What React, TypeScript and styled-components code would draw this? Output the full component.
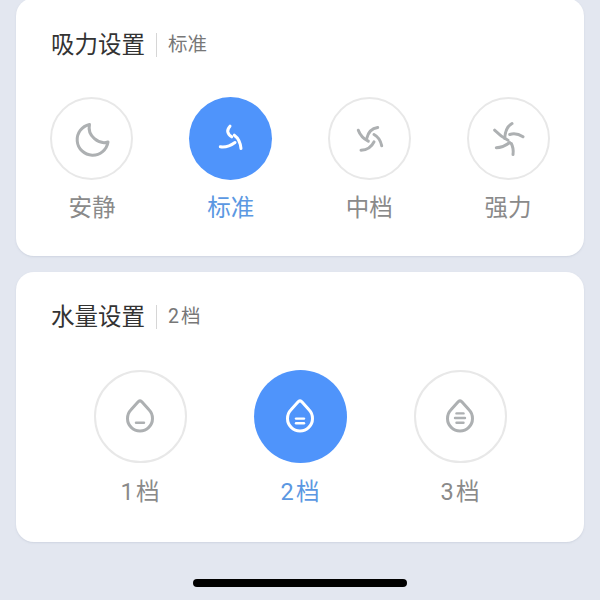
import styled, { createGlobalStyle } from 'styled-components'

type Point = [number, number]

// blade from start to end, bent towards the traced middle point
const blade = ([a, b, c]: Point[]) => {
  const cx = 1.5 * b[0] - (a[0] + c[0]) / 4
  const cy = 1.5 * b[1] - (a[1] + c[1]) / 4
  return `M${a[0]} ${a[1]}Q${cx} ${cy} ${c[0]} ${c[1]}`
}

const FAN_3: Point[][] = [
  [[17, 5.2], [13.7, 10.8], [18.7, 15.8]],
  [[7.3, 25.8], [14.7, 25.8], [22, 21.5]],
  [[21.3, 14.2], [26.3, 19.2], [28, 27.5]],
]

const FAN_4: Point[][] = [
  [[7.3, 9.2], [10.7, 15.8], [17.3, 20.2]],
  [[26.7, 6.5], [19, 9.2], [15.7, 17.5]],
  [[30.7, 24.8], [28.3, 17.5], [23, 13.5]],
  [[10, 29.2], [18.3, 27.5], [23, 20.8]],
]

const FAN_5: Point[][] = [
  [[22, 2.5], [16.3, 7.5], [14.7, 17.5]],
  [[4.7, 9.2], [10.7, 14.8], [18, 19.2]],
  [[33, 15.8], [26.3, 12.5], [19.7, 13.5]],
  [[23, 33.5], [23.3, 27.5], [21.3, 22.5]],
  [[6.3, 26.8], [13, 25.8], [19.7, 21.5]],
]

const MoonIcon = () => (
  <IconSvg viewBox="0 0 36 36" width={36} height={36} $width={3}>
    <path d="M15.5 3.5A15.5 15.5 0 1 0 34 21C25 24 13 15 15.5 3.5Z" />
  </IconSvg>
)

const FanIcon = ({ blades, active }: { blades: Point[][]; active?: boolean }) => (
  <IconSvg viewBox="0 0 36 36" width={36} height={36} $width={3} $active={active}>
    {blades.map((b, i) => (
      <path key={i} d={blade(b)} />
    ))}
  </IconSvg>
)

const DropIcon = ({ bars, active }: { bars: [number, number, number][]; active?: boolean }) => (
  <IconSvg viewBox="0 0 40 40" width={40} height={40} $width={3} $active={active}>
    <path d="M18.4 4.6Q20 3.2 21.6 4.6L29 12.8A12.5 12.5 0 1 1 11 12.8Z" />
    {bars.map(([x1, x2, y], i) => (
      <path key={i} d={`M${x1} ${y}H${x2}`} strokeWidth={2.4} />
    ))}
  </IconSvg>
)

const SUCTION = [
  { label: '安静', icon: <MoonIcon /> },
  { label: '标准', icon: <FanIcon blades={FAN_3} active />, active: true },
  { label: '中档', icon: <FanIcon blades={FAN_4} /> },
  { label: '强力', icon: <FanIcon blades={FAN_5} /> },
]

const WATER = [
  { label: '1\u200a档', icon: <DropIcon bars={[[16, 24, 25.8]]} /> },
  {
    label: '2\u200a档',
    icon: <DropIcon bars={[[16, 24, 21.6], [16, 24, 26.2]]} active />,
    active: true,
  },
  {
    label: '3\u200a档',
    icon: <DropIcon bars={[[16.5, 23.5, 16.4], [15, 25, 21], [16.5, 23.5, 25.8]]} />,
  },
]

export default function App() {
  return (
    <Page>
      <GlobalStyle />

      <Card $top={32} $bottom={33} $clipped>
        <CardHeader>
          <CardTitle>吸力设置</CardTitle>
          <CardValue>标准</CardValue>
        </CardHeader>
        <OptionRow $count={4} $inset={6.67} $gap={37}>
          {SUCTION.map((item) => (
            <Option key={item.label}>
              <OptionCircle $size={83} $active={item.active}>
                {item.icon}
              </OptionCircle>
              <OptionLabel $gap={13} $active={item.active}>
                {item.label}
              </OptionLabel>
            </Option>
          ))}
        </OptionRow>
      </Card>

      <Card $top={30} $bottom={35}>
        <CardHeader>
          <CardTitle>水量设置</CardTitle>
          <CardValue>2{'\u200a'}档</CardValue>
        </CardHeader>
        <OptionRow $count={3} $inset={44} $gap={38}>
          {WATER.map((item) => (
            <Option key={item.label}>
              <OptionCircle $size={93} $active={item.active}>
                {item.icon}
              </OptionCircle>
              <OptionLabel $gap={14} $active={item.active}>
                {item.label}
              </OptionLabel>
            </Option>
          ))}
        </OptionRow>
      </Card>

      <HomeBar />
    </Page>
  )
}

const GlobalStyle = createGlobalStyle`
  html, body {
    margin: 0;
    padding: 0;
    background-color: #e3e7f0;
  }
`

const Page = styled.div`
  width: 600px;
  height: 600px;
  box-sizing: border-box;
  overflow: hidden;
  padding: 0 16px;
  display: flex;
  flex-direction: column;
  gap: 16px;
  background-color: #e3e7f0;
  font-family: 'Roboto', 'Noto Sans CJK SC', sans-serif;
`

const Card = styled.div<{ $top: number; $bottom: number; $clipped?: boolean }>`
  background-color: #fff;
  border-radius: 18px;
  box-shadow: 0 1px 2px rgba(170, 178, 195, 0.35);
  padding: ${(p) => p.$top}px 0 ${(p) => p.$bottom}px;
  margin-top: ${(p) => (p.$clipped ? '-2px' : '0')};
`

const CardHeader = styled.div`
  display: flex;
  align-items: center;
  height: 30px;
  padding-left: 35px;
`

const CardTitle = styled.div`
  font-size: 23.5px;
  line-height: 30px;
  color: #333;
  padding-right: 11px;
`

const CardValue = styled.div`
  font-size: 19.5px;
  line-height: 24px;
  color: #777;
  padding-left: 11px;
  border-left: 1px solid #d6d6d6;
`

const OptionRow = styled.div<{ $count: number; $inset: number; $gap: number }>`
  display: grid;
  grid-template-columns: repeat(${(p) => p.$count}, 1fr);
  padding: 0 ${(p) => p.$inset}px;
  margin-top: ${(p) => p.$gap}px;
`

const Option = styled.div`
  display: flex;
  flex-direction: column;
  align-items: center;
`

const OptionCircle = styled.div<{ $size: number; $active?: boolean }>`
  width: ${(p) => p.$size}px;
  height: ${(p) => p.$size}px;
  box-sizing: border-box;
  border-radius: 50%;
  display: flex;
  align-items: center;
  justify-content: center;
  background-color: ${(p) => (p.$active ? '#4f94fb' : '#fff')};
  border: ${(p) => (p.$active ? 'none' : '2px solid #e8e8e8')};
`

const OptionLabel = styled.div<{ $gap: number; $active?: boolean }>`
  margin-top: ${(p) => p.$gap}px;
  font-size: 23.5px;
  line-height: 30px;
  white-space: pre;
  color: ${(p) => (p.$active ? '#5b98e2' : '#8a8a8a')};
`

const IconSvg = styled.svg<{ $width: number; $active?: boolean }>`
  display: block;
  fill: none;
  stroke: ${(p) => (p.$active ? '#fff' : '#adb0b2')};
  stroke-width: ${(p) => p.$width};
  stroke-linecap: round;
  stroke-linejoin: round;
`

const HomeBar = styled.div`
  width: 214px;
  height: 8px;
  border-radius: 4px;
  background-color: #000;
  align-self: center;
  margin-top: 21px;
`
